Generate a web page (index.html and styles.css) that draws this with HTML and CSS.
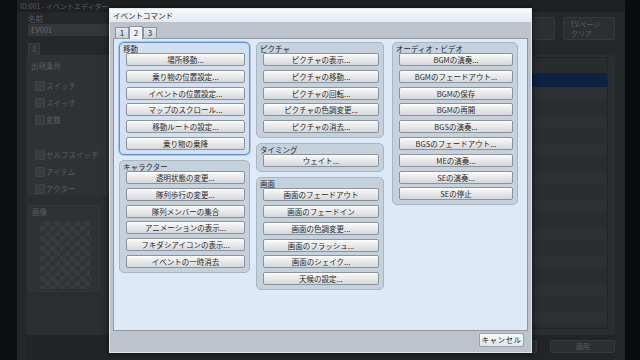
FILE: index.html
```html
<!DOCTYPE html>
<html lang="ja">
<head>
    <meta charset="UTF-8">
    <meta name="viewport" content="width=device-width, initial-scale=1.0">
    <title>イベントコマンド</title>
    <link rel="stylesheet" href="styles.css">
</head>
<body>

<div class="screen">
    <div class="side"></div>

    <!-- event editor behind the modal -->
    <div class="editor">
        <div class="ed-title">ID:001 - イベントエディター</div>
        <div class="ed-body">
            <div class="ed-top">
                <div class="name-field">
                    <div class="ed-label">名前</div>
                    <div class="name-input">EV001</div>
                </div>
                <div class="ed-top-btns">
                    <div class="dark-btn small"></div>
                    <div class="dark-btn page-clear">EVページ<br>クリア</div>
                </div>
            </div>
            <div class="ed-tabs"><div class="dark-tab">1</div></div>
            <div class="ed-main">
                <div class="ed-left">
                    <div class="cond-panel">
                        <div class="ed-label">出現条件</div>
                        <div class="check-list">
                            <div class="check-row"><span class="check"></span>スイッチ</div>
                            <div class="check-row"><span class="check"></span>スイッチ</div>
                            <div class="check-row"><span class="check"></span>変数</div>
                            <div class="check-row spaced"><span class="check"></span>セルフスイッチ</div>
                            <div class="check-row"><span class="check"></span>アイテム</div>
                            <div class="check-row"><span class="check"></span>アクター</div>
                        </div>
                    </div>
                    <div class="image-panel">
                        <div class="ed-label">画像</div>
                        <div class="checker"></div>
                    </div>
                </div>
                <div class="ed-list">
                    <div class="list-row head"></div>
                    <div class="list-row selected"></div>
                    <div class="list-row"></div>
                    <div class="list-row alt"></div>
                    <div class="list-row"></div>
                    <div class="list-row alt"></div>
                    <div class="list-row"></div>
                    <div class="list-row alt"></div>
                    <div class="list-row"></div>
                    <div class="list-row alt"></div>
                    <div class="list-row"></div>
                    <div class="list-row alt"></div>
                    <div class="list-row"></div>
                    <div class="list-row alt"></div>
                    <div class="list-row"></div>
                    <div class="list-row alt"></div>
                    <div class="list-row"></div>
                    <div class="list-row alt"></div>
                    <div class="list-row"></div>
                </div>
            </div>
            <div class="ed-bottom">
                <div class="dark-btn foot"></div>
                <div class="dark-btn foot">適用</div>
            </div>
        </div>
    </div>

    <div class="side right"></div>

    <!-- event command dialog -->
    <div class="dialog">
        <div class="dlg-title">イベントコマンド</div>
        <div class="dlg-body">
            <div class="dlg-tabs">
                <div class="dlg-tab">1</div>
                <div class="dlg-tab active">2</div>
                <div class="dlg-tab">3</div>
            </div>
            <div class="dlg-panel">
                <div class="dlg-col">
                    <div class="cmd-group selected">
                        <div class="group-label">移動</div>
                        <div class="cmd-btn">場所移動...</div>
                        <div class="cmd-btn">乗り物の位置設定...</div>
                        <div class="cmd-btn">イベントの位置設定...</div>
                        <div class="cmd-btn">マップのスクロール...</div>
                        <div class="cmd-btn">移動ルートの設定...</div>
                        <div class="cmd-btn">乗り物の乗降</div>
                    </div>
                    <div class="cmd-group">
                        <div class="group-label">キャラクター</div>
                        <div class="cmd-btn">透明状態の変更...</div>
                        <div class="cmd-btn">隊列歩行の変更...</div>
                        <div class="cmd-btn">隊列メンバーの集合</div>
                        <div class="cmd-btn">アニメーションの表示...</div>
                        <div class="cmd-btn">フキダシアイコンの表示...</div>
                        <div class="cmd-btn">イベントの一時消去</div>
                    </div>
                </div>
                <div class="dlg-col">
                    <div class="cmd-group">
                        <div class="group-label">ピクチャ</div>
                        <div class="cmd-btn">ピクチャの表示...</div>
                        <div class="cmd-btn">ピクチャの移動...</div>
                        <div class="cmd-btn">ピクチャの回転...</div>
                        <div class="cmd-btn">ピクチャの色調変更...</div>
                        <div class="cmd-btn">ピクチャの消去...</div>
                    </div>
                    <div class="cmd-group">
                        <div class="group-label">タイミング</div>
                        <div class="cmd-btn">ウェイト...</div>
                    </div>
                    <div class="cmd-group">
                        <div class="group-label">画面</div>
                        <div class="cmd-btn">画面のフェードアウト</div>
                        <div class="cmd-btn">画面のフェードイン</div>
                        <div class="cmd-btn">画面の色調変更...</div>
                        <div class="cmd-btn">画面のフラッシュ...</div>
                        <div class="cmd-btn">画面のシェイク...</div>
                        <div class="cmd-btn">天候の設定...</div>
                    </div>
                </div>
                <div class="dlg-col">
                    <div class="cmd-group">
                        <div class="group-label">オーディオ・ビデオ</div>
                        <div class="cmd-btn">BGMの演奏...</div>
                        <div class="cmd-btn">BGMのフェードアウト...</div>
                        <div class="cmd-btn">BGMの保存</div>
                        <div class="cmd-btn">BGMの再開</div>
                        <div class="cmd-btn">BGSの演奏...</div>
                        <div class="cmd-btn">BGSのフェードアウト...</div>
                        <div class="cmd-btn">MEの演奏...</div>
                        <div class="cmd-btn">SEの演奏...</div>
                        <div class="cmd-btn">SEの停止</div>
                    </div>
                </div>
            </div>
            <div class="dlg-footer">
                <div class="cancel-btn">キャンセル</div>
            </div>
        </div>
    </div>
</div>

</body>
</html>
```

FILE: styles.css
```css
body {
    margin: 0;
    width: 640px;
    height: 360px;
    overflow: hidden;
    background-color: #0c0d0e;
    font-family: "Noto Sans CJK JP", "Noto Sans", sans-serif;
    font-size: 7.5px;
}
.screen {
    position: relative;
    display: flex;
    height: 360px;
}
.side {
    width: 17px;
    background-color: #0e0f10;
}
.side.right {
    width: 15px;
    background-color: #0a0b0c;
}

/* editor (dimmed) */
.editor {
    width: 608px;
    display: flex;
    flex-direction: column;
    background-color: #25282a;
    color: #585c60;
}
.ed-title {
    height: 12px;
    line-height: 12px;
    padding-left: 3px;
    font-size: 7px;
    background-color: #1e2022;
}
.ed-body {
    flex: 1;
    display: flex;
    flex-direction: column;
    padding: 0 10px 0 9px;
}
.ed-top {
    height: 29px;
    display: flex;
    justify-content: space-between;
}
.name-field {
    padding: 2px 0 0 2px;
}
.ed-label {
    line-height: 10px;
}
.name-input {
    width: 300px;
    height: 12px;
    line-height: 12px;
    padding-left: 3px;
    background-color: #34373a;
    color: #64686c;
}
.ed-top-btns {
    display: flex;
    gap: 8px;
    padding-top: 5px;
}
.dark-btn {
    box-sizing: border-box;
    height: 23px;
    background-color: #2c2f32;
    border: 1px solid #36393c;
    border-radius: 2px;
}
.dark-btn.small {
    width: 22px;
}
.dark-btn.page-clear {
    width: 52px;
    padding: 2px 0 0 7px;
    line-height: 9px;
    font-size: 7px;
}
.ed-tabs {
    height: 14px;
    display: flex;
    align-items: flex-end;
    padding-left: 2px;
}
.dark-tab {
    box-sizing: border-box;
    width: 12px;
    height: 12px;
    line-height: 10px;
    text-align: center;
    background-color: #323538;
    border: 1px solid #3a3d40;
    border-bottom: none;
}
.ed-main {
    height: 280px;
    display: flex;
    justify-content: space-between;
    background-color: #2b2e31;
    border-radius: 3px;
}
.ed-left {
    width: 92px;
    padding-left: 1px;
}
.cond-panel {
    box-sizing: border-box;
    height: 140px;
    padding: 6px 0 0 4px;
    background-color: #2f3235;
    border-radius: 3px;
}
.check-list {
    margin-top: 6px;
    padding-left: 4px;
}
.check-row {
    height: 17px;
    display: flex;
    align-items: center;
    gap: 1px;
}
.check-row.spaced {
    margin-top: 18px;
}
.check {
    box-sizing: border-box;
    width: 10px;
    height: 10px;
    background-color: #393c3f;
    border: 1px solid #404346;
}
.image-panel {
    box-sizing: border-box;
    width: 72px;
    height: 87px;
    margin: 10px 0 0 1px;
    padding: 1px 0 0 3px;
    background-color: #2f3235;
    border: 1px solid #333639;
    border-radius: 3px;
}
.checker {
    width: 51px;
    height: 68px;
    margin: 4px 0 0 8px;
    background: repeating-conic-gradient(#393c3f 0% 25%, #313437 0% 50%) 0 0 / 10px 10px;
}
.ed-list {
    width: 75px;
    height: 270px;
    margin: 2px 7px 0 0;
    background-color: #292c2f;
    border: 1px solid #222426;
    overflow: hidden;
}
.list-row {
    height: 14px;
    background-color: #2d3033;
}
.list-row.alt {
    background-color: #2a2d30;
}
.list-row.head {
    height: 15px;
    background-color: #292c2f;
}
.list-row.selected {
    background-color: #0c2240;
}
.ed-bottom {
    flex: 1;
    display: flex;
    justify-content: flex-end;
    gap: 13px;
    padding-top: 5px;
    background-color: #222426;
}
.dark-btn.foot {
    width: 65px;
    height: 13px;
    line-height: 11px;
    text-align: center;
    font-size: 7px;
}

/* command dialog */
.dialog {
    position: absolute;
    left: 109px;
    top: 8px;
    width: 423px;
    height: 345px;
    box-sizing: border-box;
    display: flex;
    flex-direction: column;
    background-color: #bcc3cc;
    border: 1px solid #e3e8ee;
    box-shadow: 0 0 6px rgba(0, 0, 0, 0.7);
    color: #262626;
}
.dlg-title {
    height: 13px;
    line-height: 13px;
    padding-left: 3px;
    background: linear-gradient(#f7f9fc, #e3e9f1);
    color: #1e1e1e;
}
.dlg-body {
    flex: 1;
    display: flex;
    flex-direction: column;
    padding: 0 3px;
}
.dlg-tabs {
    height: 16px;
    display: flex;
    align-items: flex-end;
    padding-left: 2px;
}
.dlg-tab {
    box-sizing: border-box;
    width: 14px;
    height: 11px;
    line-height: 10px;
    text-align: center;
    font-size: 8px;
    background: linear-gradient(#e4e8ed, #c9cfd6);
    border: 1px solid #8d949d;
    border-bottom: none;
}
.dlg-tab.active {
    position: relative;
    height: 13px;
    line-height: 12px;
    margin-bottom: -1px;
    background: #eef3f9;
}
.dlg-panel {
    box-sizing: border-box;
    height: 293px;
    display: grid;
    grid-template-columns: 131px 128px 128px;
    column-gap: 6px;
    align-items: start;
    padding: 3px 0 0 5px;
    background-color: #dde9f7;
    border: 1px solid #8e98a4;
}
.dlg-col {
    display: flex;
    flex-direction: column;
    gap: 5px;
}
.dlg-col:last-child {
    margin-left: 2px;
}
.cmd-group {
    display: flex;
    flex-direction: column;
    gap: 3.8px;
    padding: 0 4px 4px 6px;
    background-color: #c6d1de;
    border: 1px solid #aab5c3;
    border-radius: 5px;
}
.cmd-group.selected {
    background-color: #d2e0f2;
    border-color: #5e92d3;
    box-shadow: 0 0 0 1px #a7c5ea;
}
.group-label {
    height: 10px;
    line-height: 11px;
    margin: 0 0 -3.8px -3px;
    color: #1f2630;
}
.cmd-btn {
    box-sizing: border-box;
    height: 13px;
    line-height: 11px;
    text-align: center;
    color: #2a2a2a;
    background: linear-gradient(#fafafa, #d5d7da);
    border: 1px solid #8b9299;
    border-radius: 2px;
    box-shadow: inset 0 1px 0 #ffffff;
    white-space: nowrap;
}
.dlg-footer {
    flex: 1;
    display: flex;
    justify-content: flex-end;
    align-items: flex-start;
    padding: 2px 4px 0 0;
}
.cancel-btn {
    box-sizing: border-box;
    width: 45px;
    height: 14px;
    line-height: 12px;
    text-align: center;
    letter-spacing: 0.5px;
    background: linear-gradient(#f8f9fb, #e2e6eb);
    border: 1px solid #98a0aa;
    border-radius: 2px;
}
```
